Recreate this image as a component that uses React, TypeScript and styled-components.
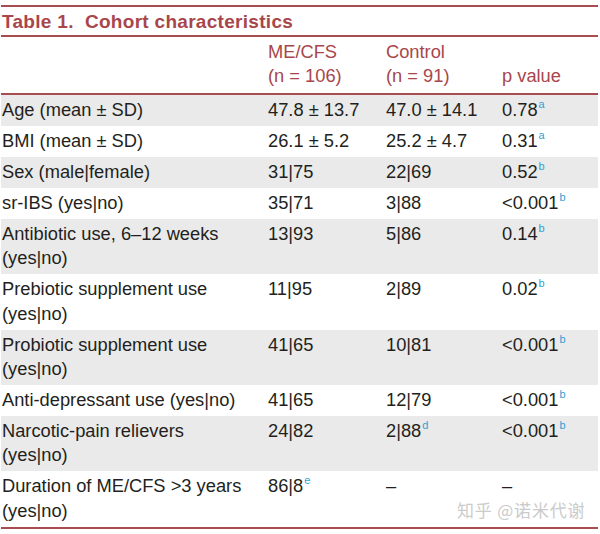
import styled, { createGlobalStyle } from "styled-components";

const GlobalStyle = createGlobalStyle`
  body {
    margin: 0;
    background: #ffffff;
    font-family: "Liberation Sans", Arial, sans-serif;
  }
`;

const Wrapper = styled.div`
  position: relative;
  width: 597px;
  height: 534px;
  margin-left: 1px;
  padding-top: 5px;
  box-sizing: border-box;
  color: #231f20;
`;

const Rule = styled.div`
  height: 2px;
  background-color: #a94c50;
`;

const Title = styled.h1`
  margin: 0;
  padding-left: 1px;
  height: 28px;
  line-height: 29px;
  font-size: 19px;
  letter-spacing: 0.3px;
  font-weight: bold;
  color: #a8464b;
  white-space: pre;
`;

const Grid = styled.div<{ $shaded?: boolean; $head?: boolean }>`
  display: grid;
  grid-template-columns: 267px 118px 116px 1fr;
  align-items: start;
  padding: ${(p) => (p.$head ? "3px 0 4px" : "3px 0 3.6px")};
  background-color: ${(p) => (p.$shaded ? "#eaeaea" : "transparent")};
  font-size: 18.3px;
  line-height: 24.4px;
  color: ${(p) => (p.$head ? "#a8464b" : "#231f20")};
`;

const Cell = styled.div`
  padding-left: 1px;
  white-space: pre-line;
`;

const HeadCell = styled.div<{ $bottom?: boolean }>`
  white-space: pre-line;
  align-self: ${(p) => (p.$bottom ? "end" : "start")};
`;

const Sup = styled.span`
  font-size: 11px;
  color: #2f9fd3;
  vertical-align: 8px;
  line-height: 0;
  margin-left: 1px;
`;

const Watermark = styled.div`
  position: absolute;
  left: 456px;
  top: 500px;
  font-family: "Noto Sans CJK SC", sans-serif;
  font-size: 17px;
  line-height: 20px;
  color: #cbcbcb;
  letter-spacing: 0.8px;
  text-shadow: 0 0 1px rgba(255, 255, 255, 0.8);
`;

type Row = {
  label: string;
  me: string;
  meSup?: string;
  ctrl: string;
  ctrlSup?: string;
  p: string;
  pSup?: string;
};

const rows: Row[] = [
  { label: "Age (mean ± SD)", me: "47.8 ± 13.7", ctrl: "47.0 ± 14.1", p: "0.78", pSup: "a" },
  { label: "BMI (mean ± SD)", me: "26.1 ± 5.2", ctrl: "25.2 ± 4.7", p: "0.31", pSup: "a" },
  { label: "Sex (male|female)", me: "31|75", ctrl: "22|69", p: "0.52", pSup: "b" },
  { label: "sr-IBS (yes|no)", me: "35|71", ctrl: "3|88", p: "<0.001", pSup: "b" },
  { label: "Antibiotic use, 6–12 weeks\n(yes|no)", me: "13|93", ctrl: "5|86", p: "0.14", pSup: "b" },
  { label: "Prebiotic supplement use\n(yes|no)", me: "11|95", ctrl: "2|89", p: "0.02", pSup: "b" },
  { label: "Probiotic supplement use\n(yes|no)", me: "41|65", ctrl: "10|81", p: "<0.001", pSup: "b" },
  { label: "Anti-depressant use (yes|no)", me: "41|65", ctrl: "12|79", p: "<0.001", pSup: "b" },
  { label: "Narcotic-pain relievers\n(yes|no)", me: "24|82", ctrl: "2|88", ctrlSup: "d", p: "<0.001", pSup: "b" },
  { label: "Duration of ME/CFS >3 years\n(yes|no)", me: "86|8", meSup: "e", ctrl: "–", p: "–" },
];

function Value({ text, sup }: { text: string; sup?: string }) {
  return (
    <div>
      {text}
      {sup && <Sup>{sup}</Sup>}
    </div>
  );
}

function App() {
  return (
    <Wrapper>
      <GlobalStyle />
      <Rule />
      <Title>{"Table 1.  Cohort characteristics"}</Title>
      <Rule />
      <Grid $head>
        <HeadCell />
        <HeadCell>{"ME/CFS\n(n = 106)"}</HeadCell>
        <HeadCell>{"Control\n(n = 91)"}</HeadCell>
        <HeadCell $bottom>p value</HeadCell>
      </Grid>
      <Rule />
      {rows.map((r, i) => (
        <Grid key={r.label} $shaded={i % 2 === 0}>
          <Cell>{r.label}</Cell>
          <Value text={r.me} sup={r.meSup} />
          <Value text={r.ctrl} sup={r.ctrlSup} />
          <Value text={r.p} sup={r.pSup} />
        </Grid>
      ))}
      <Rule />
      <Watermark>知乎 @诺米代谢</Watermark>
    </Wrapper>
  );
}

export default App;
